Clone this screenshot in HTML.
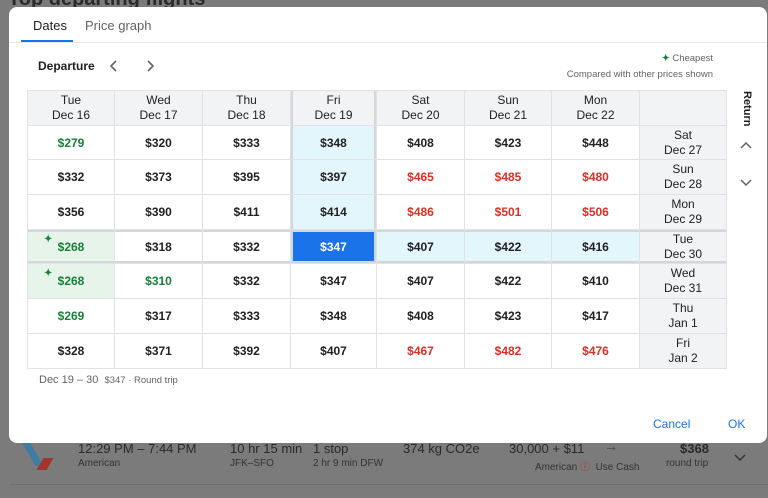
<!DOCTYPE html>
<html><head><meta charset="utf-8"><style>
*{margin:0;padding:0;box-sizing:border-box}
body{width:768px;height:498px;overflow:hidden;background:#7b7b7c;font-family:"Liberation Sans",Arial,sans-serif;position:relative}
.bgt{position:absolute;color:#2a2a2a}
.dlg{position:absolute;left:9px;top:7px;width:758px;height:436px;background:#fff;border-radius:8px;overflow:hidden}
.tab{position:absolute;top:11px;font-size:13px}
table{position:absolute;left:18px;top:83px;border-collapse:collapse;table-layout:fixed}
td{border:1px solid #e0e2e5;text-align:center;font-size:12px;font-weight:bold;color:#202124;height:34.7px;padding:0;position:relative}
td.h{background:#f1f3f4;font-weight:normal;line-height:15px;color:#202124}
.g{color:#188038}.r{color:#d93025}
.gb{background:#e6f4ea}.lb{background:#e3f6fc}
.sel{background:#1a73e8;color:#fff;box-shadow:inset 0 0 0 1px #d3d6da}
.fc{box-shadow:inset 2px 0 0 #d3d6da,inset -2px 0 0 #d3d6da}
.r4 td{box-shadow:inset 0 2px 0 #d3d6da,inset 0 -2px 0 #d3d6da}
.r4 td.sel{box-shadow:inset 0 0 0 2px #d3d6da}
.sp{position:absolute;left:16px;top:4px;color:#188038;font-size:10px;font-weight:bold}
</style></head><body>
<div class="bgt" style="left:8px;top:-12px;font-size:20px;font-weight:bold">Top departing flights</div>
<div style="position:absolute;left:28px;top:440px;width:8px;height:26px;background:#3d7da3;transform:skewX(30deg)"></div>
<div style="position:absolute;left:40px;top:458px;width:10px;height:12px;background:#a0362f;transform:skewX(-30deg)"></div>
<div class="bgt" style="left:78px;top:441px;font-size:13px">12:29 PM – 7:44 PM</div>
<div class="bgt" style="left:78px;top:458px;font-size:10px;color:#333">American</div>
<div class="bgt" style="left:230px;top:441px;font-size:13px">10 hr 15 min</div>
<div class="bgt" style="left:230px;top:458px;font-size:10px;color:#333">JFK–SFO</div>
<div class="bgt" style="left:313px;top:441px;font-size:13px">1 stop</div>
<div class="bgt" style="left:313px;top:458px;font-size:10px;color:#333">2 hr 9 min DFW</div>
<div class="bgt" style="left:403px;top:441px;font-size:13px">374 kg CO2e</div>
<div class="bgt" style="left:509px;top:441px;font-size:13px">30,000 + $11</div>
<div class="bgt" style="left:535px;top:458px;font-size:10px;color:#333">American <span style="color:#a0362f">ⓘ</span> &nbsp;Use Cash</div>
<div class="bgt" style="left:604px;top:438px;font-size:14px;color:#444">→</div>
<div class="bgt" style="left:680px;top:441px;font-size:13px;font-weight:bold">$368</div>
<div class="bgt" style="left:666px;top:458px;font-size:10px;color:#333">round trip</div>
<svg style="position:absolute;left:734px;top:452px" width="12" height="10"><path d="M1 3l5 5 5-5" fill="none" stroke="#333" stroke-width="1.5"/></svg>
<div style="position:absolute;left:10px;top:484px;width:758px;height:1px;background:#6e6e6e"></div>

<div class="dlg">
<div class="tab" style="left:24px;color:#202124">Dates</div>
<div class="tab" style="left:76px;color:#5f6368">Price graph</div>
<div style="position:absolute;left:12px;top:33px;width:52px;height:2px;background:#1a73e8"></div>
<div style="position:absolute;left:0;top:35px;width:758px;height:1px;background:#e6e8ea"></div>
<div style="position:absolute;left:29px;top:52px;font-size:12px;font-weight:bold;color:#202124">Departure</div>
<svg style="position:absolute;left:99px;top:52px" width="12" height="14"><path d="M8 2L3 7l5 5" fill="none" stroke="#5f6368" stroke-width="1.6"/></svg>
<svg style="position:absolute;left:135px;top:52px" width="12" height="14"><path d="M4 2l5 5-5 5" fill="none" stroke="#5f6368" stroke-width="1.6"/></svg>
<div style="position:absolute;right:54px;top:46px;font-size:9.5px;color:#5f6368"><span style="color:#188038;font-weight:bold">✦</span> Cheapest</div>
<div style="position:absolute;right:54px;top:62px;font-size:9.5px;color:#5f6368">Compared with other prices shown</div>
<div style="position:absolute;left:744px;top:84px;font-size:11px;font-weight:bold;color:#202124;transform:rotate(90deg);transform-origin:0 0">Return</div>
<svg style="position:absolute;left:731px;top:134px" width="12" height="10"><path d="M1 7l5-5 5 5" fill="none" stroke="#5f6368" stroke-width="1.5"/></svg>
<svg style="position:absolute;left:731px;top:170px" width="12" height="10"><path d="M1 3l5 5 5-5" fill="none" stroke="#5f6368" stroke-width="1.5"/></svg>
<table>
<colgroup><col style="width:87px"><col style="width:88px"><col style="width:88px"><col style="width:86px"><col style="width:88px"><col style="width:87px"><col style="width:88px"><col style="width:87px"></colgroup>
<tr><td class="h">Tue<br>Dec 16</td><td class="h">Wed<br>Dec 17</td><td class="h">Thu<br>Dec 18</td><td class="h lb fc">Fri<br>Dec 19</td><td class="h">Sat<br>Dec 20</td><td class="h">Sun<br>Dec 21</td><td class="h">Mon<br>Dec 22</td><td class="h"></td></tr>
<tr><td class="g">$279</td><td>$320</td><td>$333</td><td class="lb fc">$348</td><td>$408</td><td>$423</td><td>$448</td><td class="h">Sat<br>Dec 27</td></tr>
<tr><td>$332</td><td>$373</td><td>$395</td><td class="lb fc">$397</td><td class="r">$465</td><td class="r">$485</td><td class="r">$480</td><td class="h">Sun<br>Dec 28</td></tr>
<tr><td>$356</td><td>$390</td><td>$411</td><td class="lb fc">$414</td><td class="r">$486</td><td class="r">$501</td><td class="r">$506</td><td class="h">Mon<br>Dec 29</td></tr>
<tr class="r4"><td class="g gb"><span class="sp">✦</span>$268</td><td>$318</td><td>$332</td><td class="sel">$347</td><td class="lb">$407</td><td class="lb">$422</td><td class="lb">$416</td><td class="h lb">Tue<br>Dec 30</td></tr>
<tr><td class="g gb"><span class="sp">✦</span>$268</td><td class="g">$310</td><td>$332</td><td>$347</td><td>$407</td><td>$422</td><td>$410</td><td class="h">Wed<br>Dec 31</td></tr>
<tr><td class="g">$269</td><td>$317</td><td>$333</td><td>$348</td><td>$408</td><td>$423</td><td>$417</td><td class="h">Thu<br>Jan 1</td></tr>
<tr><td>$328</td><td>$371</td><td>$392</td><td>$407</td><td class="r">$467</td><td class="r">$482</td><td class="r">$476</td><td class="h">Fri<br>Jan 2</td></tr>
</table>
<div style="position:absolute;left:30px;top:367px;font-size:11px;color:#5f6368">Dec 19 – 30 &nbsp;<span style="font-size:9.5px">$347 · Round trip</span></div>
<div style="position:absolute;left:644px;top:410px;font-size:12px;color:#1a73e8">Cancel</div>
<div style="position:absolute;left:719px;top:410px;font-size:12px;color:#1a73e8">OK</div>
</div>
</body></html>
